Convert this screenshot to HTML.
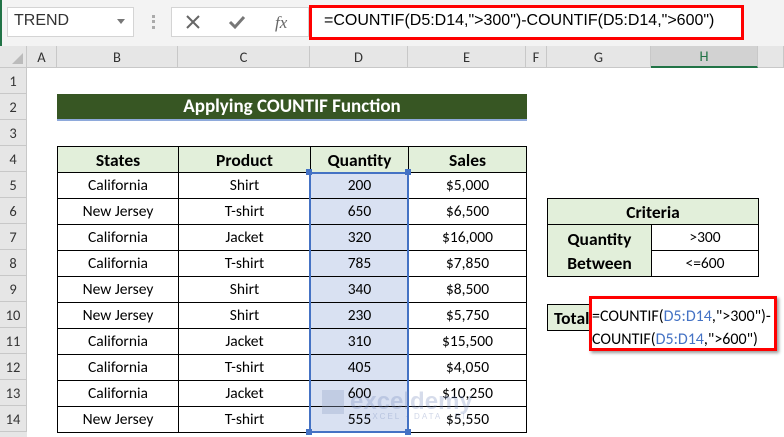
<!DOCTYPE html>
<html><head><style>
*{margin:0;padding:0;box-sizing:border-box}
body{width:784px;height:437px;overflow:hidden;background:#fff;font-family:Calibri,Carlito,"Liberation Sans",sans-serif;position:relative}
.a{position:absolute}
.c{position:absolute;display:flex;align-items:center;justify-content:center;font-size:15.5px;color:#000}
.hd{background:#e6e6e6;color:#333;font-size:14.5px;border-right:1px solid #c8c8c8;border-bottom:1px solid #c8c8c8}
table td{border:1px solid #000;text-align:center;height:26px;padding:0}
td.q{background:#d9e1f2}
</style></head><body>
<div class="a" style="left:0;top:0;width:784px;height:46px;background:#f3f3f3"></div>
<div class="a" style="left:0;top:0;width:2px;height:437px;background:#217346"></div>
<div class="a" style="left:7px;top:7px;width:127px;height:30px;background:#fff;border:1px solid #d4d4d4"></div>
<div class="a" style="left:14px;top:12px;font-size:16px;color:#333;font-family:'Liberation Sans',sans-serif">TREND</div>
<div class="a" style="left:117px;top:19px;border-left:4px solid transparent;border-right:4px solid transparent;border-top:5px solid #777"></div>
<div class="a" style="left:152px;top:15px;width:3px;height:14px;border-left:3px dotted #aaa"></div>
<div class="a" style="left:171px;top:7px;width:138px;height:30px;background:#fff;border:1px solid #d4d4d4"></div>
<svg class="a" style="left:185px;top:14px" width="110" height="18"><path d="M2 2L14 14M14 2L2 14" stroke="#666" stroke-width="2"/><path d="M45 8l5 5 9-10" stroke="#777" stroke-width="3" fill="none"/><text x="90" y="14" font-family="Liberation Serif" font-style="italic" font-size="17" fill="#666">fx</text></svg>
<div class="a" style="left:309px;top:5px;width:435px;height:35px;background:#fff;border:3px solid #f00"></div>
<div class="a" style="left:324px;top:12px;font-size:16px;color:#000;font-family:'Liberation Sans',sans-serif">=COUNTIF(D5:D14,"&gt;300")-COUNTIF(D5:D14,"&gt;600")</div>
<div class="c hd" style="left:0;top:46px;width:27px;height:22px"></div>
<div class="a" style="left:12px;top:53px;border-left:11px solid transparent;border-bottom:11px solid #bbb"></div>
<div class="c hd" style="left:27px;top:46px;width:30px;height:22px">A</div>
<div class="c hd" style="left:57px;top:46px;width:121px;height:22px">B</div>
<div class="c hd" style="left:178px;top:46px;width:132px;height:22px">C</div>
<div class="c hd" style="left:310px;top:46px;width:98px;height:22px">D</div>
<div class="c hd" style="left:408px;top:46px;width:118px;height:22px">E</div>
<div class="c hd" style="left:526px;top:46px;width:21px;height:22px">F</div>
<div class="c hd" style="left:547px;top:46px;width:104px;height:22px">G</div>
<div class="c hd" style="left:651px;top:46px;width:107px;height:22px;background:#d2d2d2;color:#217346;border-bottom:2px solid #217346">H</div>
<div class="c hd" style="left:758px;top:46px;width:26px;height:22px"></div>
<div class="a" style="left:0;top:68px">
<div class="c hd" style="position:relative;width:27px;height:26px">1</div>
<div class="c hd" style="position:relative;width:27px;height:26px">2</div>
<div class="c hd" style="position:relative;width:27px;height:26px">3</div>
<div class="c hd" style="position:relative;width:27px;height:26px">4</div>
<div class="c hd" style="position:relative;width:27px;height:26px">5</div>
<div class="c hd" style="position:relative;width:27px;height:26px">6</div>
<div class="c hd" style="position:relative;width:27px;height:26px">7</div>
<div class="c hd" style="position:relative;width:27px;height:26px">8</div>
<div class="c hd" style="position:relative;width:27px;height:26px">9</div>
<div class="c hd" style="position:relative;width:27px;height:26px">10</div>
<div class="c hd" style="position:relative;width:27px;height:26px">11</div>
<div class="c hd" style="position:relative;width:27px;height:26px">12</div>
<div class="c hd" style="position:relative;width:27px;height:26px">13</div>
<div class="c hd" style="position:relative;width:27px;height:26px">14</div>
</div>
<div class="a" style="left:0;top:432px;width:27px;height:5px;background:#e6e6e6"></div>
<div class="c" style="left:57px;top:94px;width:470px;height:27px;background:#375623;color:#fff;font-weight:bold;font-size:19px;border-bottom:2px solid #8ea9db">Applying COUNTIF Function</div>
<table class="a" style="left:57px;top:146px;border-collapse:collapse;font-size:15.5px">
<colgroup><col style="width:121px"><col style="width:132px"><col style="width:98px"><col style="width:118px"></colgroup>
<tr style="height:26px;background:#e2efda;font-weight:bold;font-size:17.5px"><td>States</td><td>Product</td><td>Quantity</td><td>Sales</td></tr>
<tr><td>California</td><td>Shirt</td><td class="q">200</td><td>$5,000</td></tr>
<tr><td>New Jersey</td><td>T-shirt</td><td class="q">650</td><td>$6,500</td></tr>
<tr><td>California</td><td>Jacket</td><td class="q">320</td><td>$16,000</td></tr>
<tr><td>California</td><td>T-shirt</td><td class="q">785</td><td>$7,850</td></tr>
<tr><td>New Jersey</td><td>Shirt</td><td class="q">340</td><td>$8,500</td></tr>
<tr><td>New Jersey</td><td>Shirt</td><td class="q">230</td><td>$5,750</td></tr>
<tr><td>California</td><td>Jacket</td><td class="q">310</td><td>$15,500</td></tr>
<tr><td>California</td><td>T-shirt</td><td class="q">405</td><td>$4,050</td></tr>
<tr><td>California</td><td>Jacket</td><td class="q">600</td><td>$10,250</td></tr>
<tr><td>New Jersey</td><td>T-shirt</td><td class="q">555</td><td>$5,550</td></tr>
</table>
<div class="a" style="left:309px;top:172px;width:100px;height:261px;border:2px solid #4472c4"></div>
<div class="a" style="left:306px;top:169px;width:6px;height:6px;background:#4472c4"></div>
<div class="a" style="left:405px;top:169px;width:6px;height:6px;background:#4472c4"></div>
<div class="a" style="left:306px;top:429px;width:6px;height:6px;background:#4472c4"></div>
<div class="a" style="left:405px;top:429px;width:6px;height:6px;background:#4472c4"></div>
<div class="a" style="left:322px;top:390px;width:22px;height:24px;background:rgba(150,165,200,0.35)"></div>
<div class="a" style="left:350px;top:388px;font-size:24px;color:rgba(120,140,190,0.3);font-weight:bold;font-family:'Liberation Sans',sans-serif">exceldemy</div>
<div class="a" style="left:365px;top:412px;font-size:8px;letter-spacing:2px;color:rgba(120,140,190,0.35);font-family:'Liberation Sans',sans-serif">EXCEL · DATA · BI</div>
<div class="c" style="left:547px;top:198px;width:212px;height:27px;border:1px solid #000;background:#e2efda;font-weight:bold;font-size:17.5px">Criteria</div>
<div class="c" style="left:547px;top:224px;width:105px;height:53px;border:1px solid #000;background:#e2efda;font-weight:bold;font-size:17.5px;line-height:24px;text-align:center">Quantity<br>Between</div>
<div class="c" style="left:651px;top:224px;width:108px;height:27px;border:1px solid #000">&gt;300</div>
<div class="c" style="left:651px;top:250px;width:108px;height:27px;border:1px solid #000">&lt;=600</div>
<div class="a" style="left:547px;top:304px;width:44px;height:27px;border:1px solid #000;background:#e2efda;font-weight:bold;font-size:17.5px;padding:2px 0 0 6px;overflow:hidden;white-space:nowrap">Total</div>
<div class="a" style="left:650px;top:300px;width:108px;height:2px;background:#217346"></div>
<div class="a" style="left:589px;top:296px;width:188px;height:55px;border:3px solid #f00;background:#fff;box-shadow:2px 2px 3px #999"></div>
<div class="a" style="left:592px;top:305px;font-size:16px;line-height:23px;color:#000;white-space:nowrap">=COUNTIF(<span style="color:#4472c4">D5:D14</span>,"&gt;300")-<br>COUNTIF(<span style="color:#4472c4">D5:D14</span>,"&gt;600")</div>
</body></html>
